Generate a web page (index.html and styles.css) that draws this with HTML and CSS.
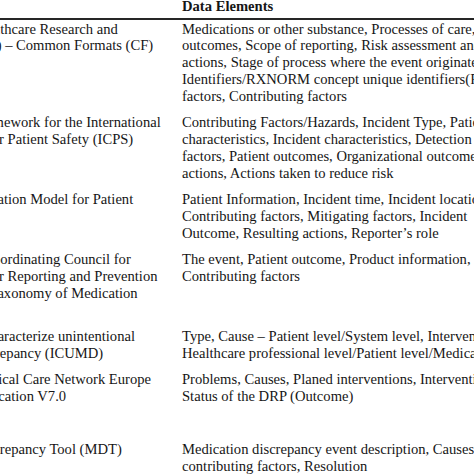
FILE: index.html
```html
<!DOCTYPE html>
<html lang="en">
<head>
<meta charset="utf-8">
<title>Data Elements</title>
<link rel="stylesheet" href="styles.css">
</head>
<body>
<div class="sheet">
  <div class="head">
    <div class="cell left"></div>
    <div class="cell right th">Data Elements</div>
  </div>
  <div class="body">
    <div class="row">
      <div class="cell left">Agency for Healthcare Research and<br>Quality (AHRQ) – Common Formats (CF)</div>
      <div class="cell right">Medications or other substance, Processes of care, Patient<br>outcomes, Scope of reporting, Risk assessment and<br>actions, Stage of process where the event originated,<br>Identifiers/RXNORM concept unique identifiers(RXCUI),<br>factors, Contributing factors</div>
    </div>
    <div class="row">
      <div class="cell left">Conceptual Framework for the International<br>Classification for Patient Safety (ICPS)</div>
      <div class="cell right">Contributing Factors/Hazards, Incident Type, Patient<br>characteristics, Incident characteristics, Detection<br>factors, Patient outcomes, Organizational outcomes,<br>actions, Actions taken to reduce risk</div>
    </div>
    <div class="row">
      <div class="cell left">Minimal Information Model for Patient<br>Safety</div>
      <div class="cell right">Patient Information, Incident time, Incident location,<br>Contributing factors, Mitigating factors, Incident<br>Outcome, Resulting actions, Reporter’s role</div>
    </div>
    <div class="row">
      <div class="cell left">The National Coordinating Council for<br>Medication Error Reporting and Prevention<br>(NCC MERP) Taxonomy of Medication<br>Errors</div>
      <div class="cell right">The event, Patient outcome, Product information,<br>Contributing factors</div>
    </div>
    <div class="row">
      <div class="cell left">Taxonomy to characterize unintentional<br>medication discrepancy (ICUMD)</div>
      <div class="cell right">Type, Cause – Patient level/System level, Intervention –<br>Healthcare professional level/Patient level/Medication</div>
    </div>
    <div class="row tall">
      <div class="cell left">The Pharmaceutical Care Network Europe<br>(PCNE) Classification V7.0</div>
      <div class="cell right">Problems, Causes, Planed interventions, Intervention acceptance,<br>Status of the DRP (Outcome)</div>
    </div>
    <div class="row">
      <div class="cell left">Medication Discrepancy Tool (MDT)</div>
      <div class="cell right">Medication discrepancy event description, Causes and<br>contributing factors, Resolution</div>
    </div>
  </div>
</div>
</body>
</html>
```
FILE: styles.css
```css
html, body {
  margin: 0;
  padding: 0;
  background: #ffffff;
  overflow: hidden;
  width: 474px;
  height: 474px;
}

.sheet {
  margin-left: -97px;
  margin-top: -1.6px;
  font-family: "Liberation Serif", "Times New Roman", serif;
  font-size: 14.6px;
  line-height: 16.8px;
  color: #161616;
}

.head {
  display: flex;
  padding-bottom: 2.4px;
  border-bottom: 2px solid #262626;
}

.th {
  font-weight: bold;
}

.body {
  padding-top: 1px;
}

.row {
  display: flex;
  padding-bottom: 9.6px;
}

.row.tall {
  padding-bottom: 36.6px;
}

.cell {
  white-space: nowrap;
}

.left {
  flex: 0 0 279px;
}

.right {
  flex: 0 0 auto;
}
```
